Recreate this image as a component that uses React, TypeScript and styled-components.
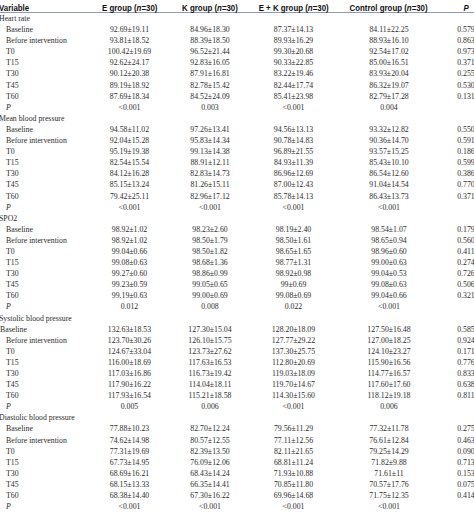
import React from 'react';
import styled, { createGlobalStyle } from 'styled-components';

const GlobalStyle = createGlobalStyle`
  html, body {
    margin: 0;
    padding: 0;
    background: #ffffff;
    overflow: hidden;
  }
`;

const COLS = '91px 79px 82px 85px 106px 48px';

type Row = { label: string; values: string[]; p?: boolean; flat?: boolean };
type Group = { title: string; rows: Row[] };

const mk = (label: string, values: string[], extra: Partial<Row> = {}): Row => ({ label, values, ...extra });

const groups: Group[] = [
  {
    title: 'Heart rate',
    rows: [
      mk('Baseline', ['92.69±19.11', '84.96±18.30', '87.37±14.13', '84.11±22.25', '0.579']),
      mk('Before intervention', ['93.81±18.52', '88.39±18.50', '89.93±16.29', '88.93±16.10', '0.863']),
      mk('T0', ['100.42±19.69', '96.52±21.44', '99.30±20.68', '92.54±17.02', '0.973']),
      mk('T15', ['92.62±24.17', '92.83±16.05', '90.33±22.85', '85.00±16.51', '0.371']),
      mk('T30', ['90.12±20.38', '87.91±16.81', '83.22±19.46', '83.93±20.04', '0.255']),
      mk('T45', ['89.19±18.92', '82.78±15.42', '82.44±17.74', '86.32±19.07', '0.530']),
      mk('T60', ['87.69±18.34', '84.52±24.09', '85.41±23.98', '82.79±17.28', '0.131']),
      mk('P', ['<0.001', '0.003', '<0.001', '0.004', ''], { p: true }),
    ],
  },
  {
    title: 'Mean blood pressure',
    rows: [
      mk('Baseline', ['94.58±11.02', '97.26±13.41', '94.56±13.13', '93.32±12.82', '0.550']),
      mk('Before intervention', ['92.04±15.28', '95.83±14.34', '90.78±14.83', '90.36±14.70', '0.591']),
      mk('T0', ['95.19±19.38', '99.13±14.38', '96.89±21.55', '93.57±15.25', '0.186']),
      mk('T15', ['82.54±15.54', '88.91±12.11', '84.93±11.39', '85.43±10.10', '0.599']),
      mk('T30', ['84.12±16.28', '82.83±14.73', '86.96±12.69', '86.54±12.60', '0.386']),
      mk('T45', ['85.15±13.24', '81.26±15.11', '87.00±12.43', '91.04±14.54', '0.770']),
      mk('T60', ['79.42±25.11', '82.96±17.12', '85.78±14.13', '86.43±13.73', '0.371']),
      mk('P', ['<0.001', '<0.001', '<0.001', '<0.001', ''], { p: true }),
    ],
  },
  {
    title: 'SPO2',
    rows: [
      mk('Baseline', ['98.92±1.02', '98.23±2.60', '98.19±2.40', '98.54±1.07', '0.179']),
      mk('Before intervention', ['98.92±1.02', '98.50±1.79', '98.50±1.61', '98.65±0.94', '0.560']),
      mk('T0', ['99.04±0.66', '98.50±1.82', '98.65±1.65', '98.96±0.60', '0.411']),
      mk('T15', ['99.08±0.63', '98.68±1.36', '98.77±1.31', '99.00±0.63', '0.274']),
      mk('T30', ['99.27±0.60', '98.86±0.99', '98.92±0.98', '99.04±0.53', '0.726']),
      mk('T45', ['99.23±0.59', '99.05±0.65', '99±0.69', '99.08±0.63', '0.506']),
      mk('T60', ['99.19±0.63', '99.00±0.69', '99.08±0.69', '99.04±0.66', '0.321']),
      mk('P', ['0.012', '0.008', '0.022', '<0.001', ''], { p: true }),
    ],
  },
  {
    title: 'Systolic blood pressure',
    rows: [
      mk('Baseline', ['132.63±18.53', '127.30±15.04', '128.20±18.09', '127.50±16.48', '0.585'], { flat: true }),
      mk('Before intervention', ['123.70±30.26', '126.10±15.75', '127.77±29.22', '127.00±18.25', '0.924']),
      mk('T0', ['124.67±33.04', '123.73±27.62', '137.30±25.75', '124.10±23.27', '0.171']),
      mk('T15', ['116.00±18.69', '117.63±16.53', '112.80±20.69', '115.90±16.56', '0.776']),
      mk('T30', ['117.03±16.86', '116.73±19.42', '119.03±18.09', '114.77±16.57', '0.833']),
      mk('T45', ['117.90±16.22', '114.04±18.11', '119.70±14.67', '117.60±17.60', '0.638']),
      mk('T60', ['117.93±16.54', '115.21±18.58', '114.30±15.60', '118.12±19.18', '0.811']),
      mk('P', ['0.005', '0.006', '<0.001', '0.006', ''], { p: true }),
    ],
  },
  {
    title: 'Diastolic blood pressure',
    rows: [
      mk('Baseline', ['77.88±10.23', '82.70±12.24', '79.56±11.29', '77.32±11.78', '0.275']),
      mk('Before intervention', ['74.62±14.98', '80.57±12.55', '77.11±12.56', '76.61±12.84', '0.463']),
      mk('T0', ['77.31±19.69', '82.39±13.50', '82.11±21.65', '79.25±14.29', '0.090']),
      mk('T15', ['67.73±14.95', '76.09±12.06', '68.81±11.24', '71.82±9.88', '0.713']),
      mk('T30', ['68.69±16.21', '68.43±14.24', '71.93±10.88', '71.61±11', '0.153']),
      mk('T45', ['68.15±13.33', '66.35±14.41', '70.85±11.80', '70.57±17.76', '0.075']),
      mk('T60', ['68.38±14.40', '67.30±16.22', '69.96±14.68', '71.75±12.35', '0.414']),
      mk('P', ['<0.001', '<0.001', '<0.001', '<0.001', ''], { p: true }),
    ],
  },
];

const Table = styled.div`
  width: 491px;
  margin-left: -1px;
  font-family: 'Liberation Serif', 'Times New Roman', serif;
  color: #2b2b2b;
`;

const HeadRow = styled.div`
  display: grid;
  grid-template-columns: ${COLS};
  align-items: center;
  height: 12px;
  border-bottom: 1px solid #8e99bf;
`;

const HeadCell = styled.div<{ $left?: boolean }>`
  text-align: ${(p) => (p.$left ? 'left' : 'center')};
  white-space: nowrap;
  line-height: 12px;
`;

const HeadText = styled.span<{ $left?: boolean }>`
  display: inline-block;
  font-family: 'Liberation Sans', Arial, sans-serif;
  font-weight: 700;
  font-size: 9.6px;
  color: #111;
  transform: scaleX(0.82);
  transform-origin: ${(p) => (p.$left ? 'left center' : 'center')};
  em {
    font-style: italic;
  }
`;

const BodyRow = styled.div`
  display: grid;
  grid-template-columns: ${COLS};
  align-items: center;
  height: 11.1px;
  font-size: 7.8px;
  line-height: 11.1px;
  white-space: nowrap;
`;

const TitleCell = styled.div`
  grid-column: 1 / -1;
`;

const LabelCell = styled.div<{ $flat?: boolean; $italic?: boolean }>`
  padding-left: ${(p) => (p.$flat ? '1px' : '7px')};
  font-style: ${(p) => (p.$italic ? 'italic' : 'normal')};
`;

const ValueCell = styled.div`
  text-align: center;
`;

export default function App() {
  return (
    <>
      <GlobalStyle />
      <Table>
        <HeadRow>
          <HeadCell $left>
            <HeadText $left>Variable</HeadText>
          </HeadCell>
          <HeadCell>
            <HeadText>E group (<em>n</em>=30)</HeadText>
          </HeadCell>
          <HeadCell>
            <HeadText>K group (<em>n</em>=30)</HeadText>
          </HeadCell>
          <HeadCell>
            <HeadText>E + K group (<em>n</em>=30)</HeadText>
          </HeadCell>
          <HeadCell>
            <HeadText>Control group (<em>n</em>=30)</HeadText>
          </HeadCell>
          <HeadCell>
            <HeadText><em>P</em></HeadText>
          </HeadCell>
        </HeadRow>
        {groups.map((g) => (
          <React.Fragment key={g.title}>
            <BodyRow>
              <TitleCell>{g.title}</TitleCell>
            </BodyRow>
            {g.rows.map((r) => (
              <BodyRow key={g.title + r.label}>
                <LabelCell $flat={r.flat} $italic={r.p}>{r.label}</LabelCell>
                {r.values.map((v, i) => (
                  <ValueCell key={i}>{v}</ValueCell>
                ))}
              </BodyRow>
            ))}
          </React.Fragment>
        ))}
      </Table>
    </>
  );
}
